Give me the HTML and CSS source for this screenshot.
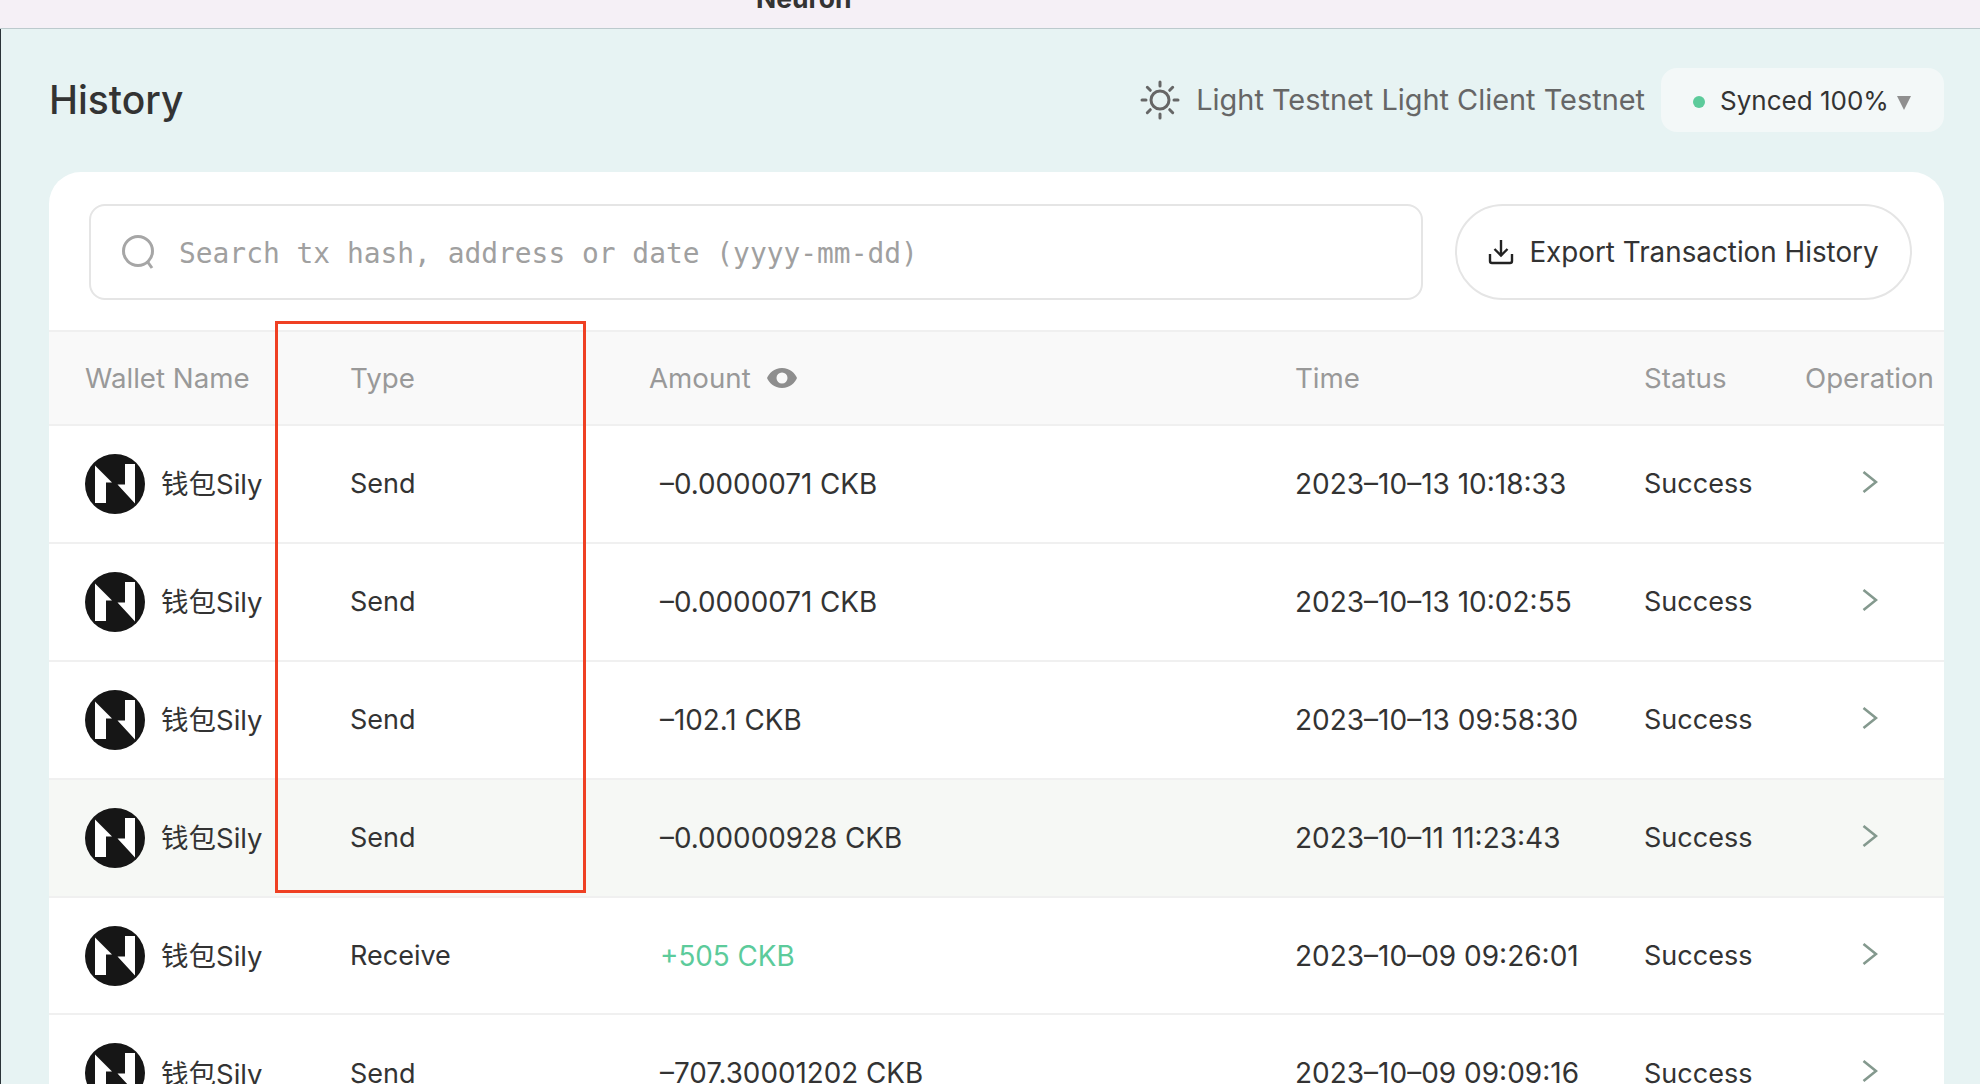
FILE: index.html
```html
<!DOCTYPE html>
<html lang="en">
<head>
<meta charset="utf-8">
<title>Neuron History</title>
<link rel="stylesheet" href="styles.css">
</head>
<body>
<svg class="defs" width="0" height="0" aria-hidden="true">
  <symbol id="logo" viewBox="0 0 60 60">
    <circle cx="30" cy="30" r="30" fill="#161616"/>
    <path fill="#fff" d="M10 11.500 27 28.500H21V49H10ZM40 10H50V49.500L32.500 30.500H40Z"/>
  </symbol>
  <symbol id="chev" viewBox="0 0 16 22">
    <path d="M1.500 1 14 11 1.500 21" fill="none" stroke="#84998e" stroke-width="2.600"/>
  </symbol>
</svg>
<div class="titlebar"><span class="titlebar-text">Neuron</span></div>
<main class="main">
  <header class="page-head">
    <h1 class="page-title">History</h1>
    <div class="net">
      <svg class="sun" viewBox="0 0 40 40" width="40" height="40" fill="none" stroke="#666" stroke-width="3" stroke-linecap="round">
        <circle cx="20" cy="20" r="9"/>
        <path d="M20 2v4M20 34v4M2 20h4M34 20h4M7.300 7.300l3 3M29.700 29.700l3 3M7.300 32.700l3-3M29.700 10.300l3-3"/>
      </svg>
      <span class="net-name">Light Testnet Light Client Testnet</span>
    </div>
    <div class="sync"><i class="dot"></i><span class="sync-text">Synced 100%</span><i class="caret"></i></div>
  </header>
  <section class="card">
    <div class="toolbar">
      <label class="search">
        <svg class="search-icon" viewBox="0 0 34 34" width="34" height="34" fill="none" stroke="#a6a6a6" stroke-width="3">
          <circle cx="16" cy="16" r="14.500"/><path d="M25 26 30 33"/>
        </svg>
        <input class="search-input" placeholder="Search tx hash, address or date (yyyy-mm-dd)">
      </label>
      <button class="export">
        <svg viewBox="0 0 26 26" width="26" height="26" fill="none" stroke="#222" stroke-width="2.400">
          <path d="M13 1v15M6.500 10 13 16.500 19.500 10M2 15v7a2 2 0 0 0 2 2h18a2 2 0 0 0 2-2v-7"/>
        </svg>
        <span>Export Transaction History</span>
      </button>
    </div>
    <div class="table">
      <div class="row row-head">
        <div>Wallet Name</div><div>Type</div>
        <div class="amount-head">Amount
          <svg viewBox="0 0 32 22" width="32" height="22"><path fill="#8e8e8e" fill-rule="evenodd" d="M16 1C8 1 3 6.500 1 11c2 4.500 7 10 15 10s13-5.500 15-10C29 6.500 24 1 16 1Zm0 4.500a5.500 5.500 0 1 1 0 11 5.500 5.500 0 0 1 0-11Z"/></svg>
        </div>
        <div>Time</div><div>Status</div><div>Operation</div>
      </div>
      <div class="row">
        <div class="wallet"><svg class="logo"><use href="#logo"/></svg><span>钱包Sily</span></div><div>Send</div><div class="amount">–0.0000071 CKB</div><div class="time">2023–10–13 10:18:33</div><div>Success</div><div class="op"><svg class="chev"><use href="#chev"/></svg></div>
      </div>
      <div class="row">
        <div class="wallet"><svg class="logo"><use href="#logo"/></svg><span>钱包Sily</span></div><div>Send</div><div class="amount">–0.0000071 CKB</div><div class="time">2023–10–13 10:02:55</div><div>Success</div><div class="op"><svg class="chev"><use href="#chev"/></svg></div>
      </div>
      <div class="row">
        <div class="wallet"><svg class="logo"><use href="#logo"/></svg><span>钱包Sily</span></div><div>Send</div><div class="amount">–102.1 CKB</div><div class="time">2023–10–13 09:58:30</div><div>Success</div><div class="op"><svg class="chev"><use href="#chev"/></svg></div>
      </div>
      <div class="row row-hover">
        <div class="wallet"><svg class="logo"><use href="#logo"/></svg><span>钱包Sily</span></div><div>Send</div><div class="amount">–0.00000928 CKB</div><div class="time">2023–10–11 11:23:43</div><div>Success</div><div class="op"><svg class="chev"><use href="#chev"/></svg></div>
      </div>
      <div class="row">
        <div class="wallet"><svg class="logo"><use href="#logo"/></svg><span>钱包Sily</span></div><div>Receive</div><div class="amount amount-in">+505 CKB</div><div class="time">2023–10–09 09:26:01</div><div>Success</div><div class="op"><svg class="chev"><use href="#chev"/></svg></div>
      </div>
      <div class="row">
        <div class="wallet"><svg class="logo"><use href="#logo"/></svg><span>钱包Sily</span></div><div>Send</div><div class="amount">–707.30001202 CKB</div><div class="time">2023–10–09 09:09:16</div><div>Success</div><div class="op"><svg class="chev"><use href="#chev"/></svg></div>
      </div>
    </div>
  </section>
</main>
<div class="highlight"></div>
</body>
</html>
```
FILE: styles.css
```css
* { box-sizing: border-box; }
html, body { margin: 0; height: 1084px; overflow: hidden; }
body {
  position: relative;
  font-family: "Inter", "Noto Sans CJK SC", sans-serif;
  font-size: 27px;
  color: #333;
  background: #e7f3f3;
}
.defs { position: absolute; }
.titlebar {
  height: 29px;
  background: #f5f0f6;
  border-bottom: 1px solid #bccacd;
  overflow: hidden;
  display: flex;
  justify-content: flex-start;
  align-items: flex-end;
  padding-left: 756px;
}
.titlebar-text {
  font-size: 26.500px;
  font-weight: 700;
  line-height: 30px;
  margin-bottom: 15px;
  color: #333;
  flex: none;
}
.main {
  height: 1055px;
  padding: 0 36px 0 48px;
  border-left: 1px solid #2b3338;
}
.page-head {
  display: flex;
  align-items: center;
  height: 143px;
  padding-bottom: 2px;
}
.page-title {
  margin: 0 auto 0 0;
  font-size: 39px;
  font-weight: 500;
  color: #333;
}
.net { display: flex; align-items: center; gap: 16px; color: #666; margin-right: 16px; font-size: 28.900px; }
.sun { flex: none; }
.sync {
  display: flex;
  align-items: center;
  width: 283px;
  height: 64px;
  padding-left: 32px;
  border-radius: 16px;
  background: #f3f8f8;
  font-size: 26px;
}
.sync-text { margin-top: 2px; }
.dot { width: 12px; height: 12px; border-radius: 50%; background: #5ccb9b; margin-right: 15px; margin-top: 4px; }
.caret {
  width: 0; height: 0;
  margin-left: 8px; margin-top: 6px;
  border-left: 7.500px solid transparent;
  border-right: 7.500px solid transparent;
  border-top: 14px solid #8f8f8f;
}
.card {
  background: #fff;
  border-radius: 32px 32px 0 0;
  height: 960px;
  overflow: hidden;
}
.toolbar {
  display: flex;
  gap: 32px;
  height: 158px;
  padding: 32px 32px 30px 40px;
}
.search {
  flex: 1;
  display: flex;
  align-items: center;
  gap: 23px;
  padding: 0 31px;
  border: 2px solid #e5e5e5;
  border-radius: 16px;
}
.search-icon { flex: none; }
.search-input {
  flex: 1;
  min-width: 0;
  border: 0;
  outline: 0;
  padding: 2px 0 0;
  background: transparent;
  font-family: "DejaVu Sans Mono", monospace;
  font-size: 27.900px;
}
.search-input::placeholder { color: #a0a0a0; opacity: 1; }
.export {
  flex: none;
  width: 457px;
  display: flex;
  align-items: center;
  justify-content: center;
  gap: 15px;
  background: #fff;
  border: 2px solid #e5e5e5;
  border-radius: 48px;
  font: inherit;
  font-size: 27.800px;
  color: #333;
}
.row {
  display: grid;
  grid-template-columns: 265px 299px 646px 349px 161px 1fr;
  align-items: center;
  height: 117.900px;
  padding-left: 36px;
  border-top: 2px solid #f0f0f0;
}
.row-head {
  height: 94px;
  background: #f9f9f9;
  color: #999;
  font-size: 27.700px;
}
.row-hover { background: #f6f8f5; }
.amount-head { display: flex; align-items: center; gap: 15px; }
.wallet { display: flex; align-items: center; gap: 16px; white-space: nowrap; font-size: 27.500px; }
.wallet span { margin-top: -3px; }
.logo { width: 60px; height: 60px; flex: none; }
.amount { padding-left: 11px; font-size: 27.800px; }
.time { font-size: 28px; }
.amount-in { color: #5ccb9b; }
.op { padding-left: 57px; display: flex; }
.chev { width: 16px; height: 22px; margin-top: -4px; }
.highlight {
  position: absolute;
  left: 275px;
  top: 321px;
  width: 311px;
  height: 572px;
  border: 3px solid #ef4023;
  pointer-events: none;
}
```
